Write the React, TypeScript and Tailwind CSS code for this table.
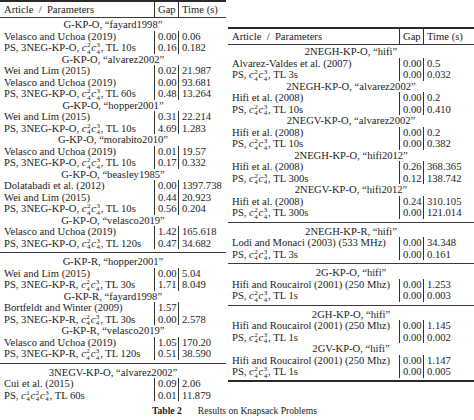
import * as React from "react";

type Row =
  | { g: string }
  | { a: React.ReactNode; gap: string; time: string };

// c with stacked super/subscript, like $c_4^2$
const C = ({ sup }: { sup: string }) => (
  <span className="whitespace-nowrap">
    <i>c</i>
    <sup className="text-[7px] -top-[4px] ml-[0.5px]">{sup}</sup>
    <sub className="text-[7px] -bottom-[2.5px] -ml-[3.5px] mr-[0.8px]">4</sub>
  </span>
);

const cc = (
  <>
    <C sup="2" />
    <C sup="3" />
  </>
);

const ps = (prob: string, tl: string) => (
  <>
    PS, {prob ? prob + ", " : ""}
    {cc}, TL {tl}
  </>
);

const left: Row[][] = [
  [
    { g: "G-KP-O, \u201cfayard1998\u201d" },
    { a: "Velasco and Uchoa (2019)", gap: "0.00", time: "0.06" },
    { a: ps("3NEG-KP-O", "10s"), gap: "0.16", time: "0.182" },
    { g: "G-KP-O, \u201calvarez2002\u201d" },
    { a: "Wei and Lim (2015)", gap: "0.02", time: "21.987" },
    { a: "Velasco and Uchoa (2019)", gap: "0.00", time: "93.681" },
    { a: ps("3NEG-KP-O", "60s"), gap: "0.48", time: "13.264" },
    { g: "G-KP-O, \u201chopper2001\u201d" },
    { a: "Wei and Lim (2015)", gap: "0.31", time: "22.214" },
    { a: ps("3NEG-KP-O", "10s"), gap: "4.69", time: "1.283" },
    { g: "G-KP-O, \u201cmorabito2010\u201d" },
    { a: "Velasco and Uchoa (2019)", gap: "0.01", time: "19.57" },
    { a: ps("3NEG-KP-O", "10s"), gap: "0.17", time: "0.332" },
    { g: "G-KP-O, \u201cbeasley1985\u201d" },
    { a: "Dolatabadi et al. (2012)", gap: "0.00", time: "1397.738" },
    { a: "Wei and Lim (2015)", gap: "0.44", time: "20.923" },
    { a: ps("3NEG-KP-O", "10s"), gap: "0.56", time: "0.204" },
    { g: "G-KP-O, \u201cvelasco2019\u201d" },
    { a: "Velasco and Uchoa (2019)", gap: "1.42", time: "165.618" },
    { a: ps("3NEG-KP-O", "120s"), gap: "0.47", time: "34.682" },
  ],
  [
    { g: "G-KP-R, \u201chopper2001\u201d" },
    { a: "Wei and Lim (2015)", gap: "0.00", time: "5.04" },
    { a: ps("3NEG-KP-R", "30s"), gap: "1.71", time: "8.049" },
    { g: "G-KP-R, \u201cfayard1998\u201d" },
    { a: "Bortfeldt and Winter (2009)", gap: "1.57", time: "" },
    { a: ps("3NEG-KP-R", "30s"), gap: "0.00", time: "2.578" },
    { g: "G-KP-R, \u201cvelasco2019\u201d" },
    { a: "Velasco and Uchoa (2019)", gap: "1.05", time: "170.20" },
    { a: ps("3NEG-KP-R", "120s"), gap: "0.51", time: "38.590" },
  ],
  [
    { g: "3NEGV-KP-O, \u201calvarez2002\u201d" },
    { a: "Cui et al. (2015)", gap: "0.09", time: "2.06" },
    {
      a: (
        <>
          PS, <C sup="1" />
          {cc}, TL 60s
        </>
      ),
      gap: "0.01",
      time: "11.879",
    },
  ],
];

const hr = "Hifi and Roucairol (2001) (250 Mhz)";

const right: Row[][] = [
  [
    { g: "2NEGH-KP-O, \u201chifi\u201d" },
    { a: "Alvarez-Valdes et al. (2007)", gap: "0.00", time: "0.5" },
    { a: ps("", "3s"), gap: "0.00", time: "0.032" },
    { g: "2NEGH-KP-O, \u201calvarez2002\u201d" },
    { a: "Hifi et al. (2008)", gap: "0.00", time: "0.2" },
    { a: ps("", "10s"), gap: "0.00", time: "0.410" },
    { g: "2NEGV-KP-O, \u201calvarez2002\u201d" },
    { a: "Hifi et al. (2008)", gap: "0.00", time: "0.2" },
    { a: ps("", "10s"), gap: "0.00", time: "0.382" },
    { g: "2NEGH-KP-O, \u201chifi2012\u201d" },
    { a: "Hifi et al. (2008)", gap: "0.26", time: "368.365" },
    { a: ps("", "300s"), gap: "0.12", time: "138.742" },
    { g: "2NEGV-KP-O, \u201chifi2012\u201d" },
    { a: "Hifi et al. (2008)", gap: "0.24", time: "310.105" },
    { a: ps("", "300s"), gap: "0.00", time: "121.014" },
  ],
  [
    { g: "2NEGH-KP-R, \u201chifi\u201d" },
    { a: "Lodi and Monaci (2003) (533 MHz)", gap: "0.00", time: "34.348" },
    { a: ps("", "3s"), gap: "0.00", time: "0.161" },
  ],
  [
    { g: "2G-KP-O, \u201chifi\u201d" },
    { a: hr, gap: "0.00", time: "1.253" },
    { a: ps("", "1s"), gap: "0.00", time: "0.003" },
  ],
  [
    { g: "2GH-KP-O, \u201chifi\u201d" },
    { a: hr, gap: "0.00", time: "1.145" },
    { a: ps("", "1s"), gap: "0.00", time: "0.002" },
    { g: "2GV-KP-O, \u201chifi\u201d" },
    { a: hr, gap: "0.00", time: "1.147" },
    { a: ps("", "1s"), gap: "0.00", time: "0.005" },
  ],
];

const Table = ({ sections, cols, bottom }: { sections: Row[][]; cols: string; bottom: boolean }) => (
  <div className={`w-full border-t-2 border-[#2a2a2a] ${bottom ? "border-b-2 pb-[2px]" : ""}`}>
    <div className={`grid ${cols} h-[16px] items-stretch border-b border-[#3a3a3a]`}>
      <div className="pl-[4px] leading-[16px]">Article&nbsp;&nbsp;/&nbsp;&nbsp;Parameters</div>
      <div className="border-l border-[#333] pl-[3px] leading-[16px]">Gap</div>
      <div className="border-l border-[#333] pl-[3px] leading-[16px]">Time (s)</div>
    </div>
    {sections.map((rows, si) => (
      <div key={si} className={si > 0 ? "mt-[3px] border-t border-[#3a3a3a] pt-[3px]" : "pt-[1px]"}>
        {rows.map((r, i) =>
          "g" in r ? (
            <div key={i} className="h-[11.5px] leading-[11.5px] text-center whitespace-nowrap">
              {r.g}
            </div>
          ) : (
            <div key={i} className={`grid ${cols} h-[11.5px] leading-[11.5px]`}>
              <div className="pl-[4px] whitespace-nowrap">{r.a}</div>
              <div className="border-l border-[#333] pl-[3px]">{r.gap}</div>
              <div className="border-l border-[#333] pl-[3px]">{r.time}</div>
            </div>
          )
        )}
      </div>
    ))}
  </div>
);

export default function App() {
  return (
    <div className="w-[474px] h-[420px] overflow-hidden bg-white text-[#1c1c1c] font-['Liberation_Serif',serif] text-[10.6px]">
      <div className="flex gap-[2px]">
        <div className="w-[226px] shrink-0">
          <Table sections={left} cols="grid-cols-[154px_24px_1fr]" bottom={false} />
        </div>
        <div className="flex-1 pt-[27px]">
          <Table sections={right} cols="grid-cols-[171px_24px_1fr]" bottom={true} />
        </div>
      </div>
      <div className="flex gap-[16px] pl-[152px] pt-[4px] text-[9.6px] leading-[12px]">
        <span className="font-bold">Table 2</span>
        <span>Results on Knapsack Problems</span>
      </div>
    </div>
  );
}
